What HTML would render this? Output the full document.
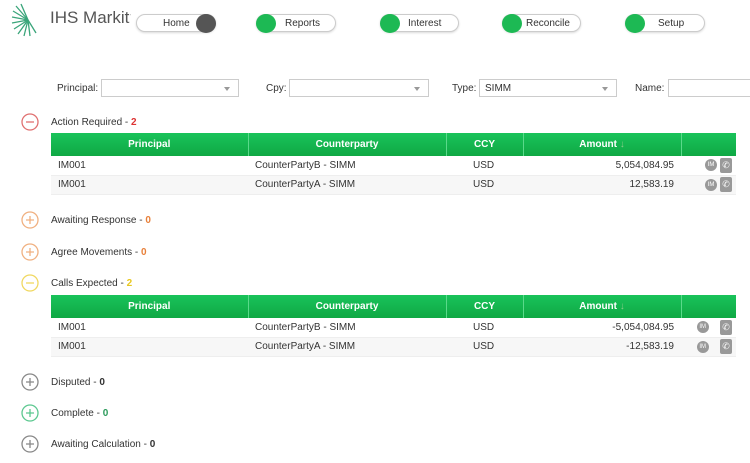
<!DOCTYPE html>
<html><head><style>
*{margin:0;padding:0;box-sizing:border-box}
body{width:750px;height:463px;background:#fff;font-family:"Liberation Sans",sans-serif;font-size:10px;color:#333;position:relative;overflow:hidden}
.a{position:absolute}
.pill{position:absolute;height:18px;border:1px solid #ccc;border-radius:9px;box-shadow:0 1px 2px rgba(0,0,0,.15);font-size:10px;line-height:17px;text-align:center;background:#fff}
.pill span{position:absolute;top:0;line-height:17px}
.dot{position:absolute;top:-1px;width:20px;height:19px;border-radius:50%;background:#1db954}
.lbl{position:absolute;font-size:10px;top:83px}
.sel{position:absolute;top:79px;height:18px;border:1px solid #ccc;background:#fff;font-size:10px;line-height:16px;padding-left:5px}
.sel i{position:absolute;right:8px;top:7px;border:3px solid transparent;border-top:4px solid #999}
.ic{position:absolute;left:21px}
.h{position:absolute;left:51px;font-size:10px}
table{position:absolute;left:51px;width:685px;border-collapse:collapse;font-size:10px}
th{background:linear-gradient(#19c35a,#0fa844);color:#fff;height:23px;font-weight:bold;border-right:1px solid #5ad98a}
td{height:19px;border-bottom:1px solid #eee;padding:0 7px}
tr.b td{background:#f7f7f7}
.im{display:inline-block;width:12px;height:12px;border-radius:50%;background:#999;color:#fff;font-size:6px;line-height:12px;text-align:center;vertical-align:middle;margin-right:3px}
.ph{display:inline-block;width:12px;height:15px;border-radius:2px;background:#999;vertical-align:middle;color:#fff;font-size:9px;line-height:15px;text-align:center}
</style></head><body>
<svg class="a" style="left:10px;top:3px" width="36" height="34" viewBox="0 0 36 34">
<g stroke="#3aa57a" stroke-width="1.3">
<line x1="18" y1="17" x2="3" y2="8"/><line x1="18" y1="17" x2="2" y2="14"/><line x1="18" y1="17" x2="2" y2="20"/><line x1="18" y1="17" x2="4" y2="26"/><line x1="18" y1="17" x2="8" y2="31"/><line x1="18" y1="17" x2="14" y2="33"/><line x1="18" y1="17" x2="6" y2="3"/><line x1="18" y1="17" x2="11" y2="1"/><line x1="18" y1="17" x2="20" y2="33"/><line x1="18" y1="17" x2="26" y2="30"/>
</g><circle cx="25" cy="10" r="8" fill="#fff"/></svg>
<div class="a" style="left:50px;top:8px;font-size:17px;color:#555">IHS Markit<sup style="font-size:6px">·</sup></div>
<div class="pill" style="left:136px;top:14px;width:80px"><span style="left:26px">Home</span><div class="dot" style="right:-1px;background:#555"></div></div>
<div class="pill" style="left:256px;top:14px;width:80px"><div class="dot" style="left:-1px"></div><span style="left:28px">Reports</span></div>
<div class="pill" style="left:380px;top:14px;width:79px"><div class="dot" style="left:-1px"></div><span style="left:27px">Interest</span></div>
<div class="pill" style="left:502px;top:14px;width:79px"><div class="dot" style="left:-1px"></div><span style="left:23px">Reconcile</span></div>
<div class="pill" style="left:625px;top:14px;width:80px"><div class="dot" style="left:-1px"></div><span style="left:32px">Setup</span></div>
<div class="lbl" style="left:57px">Principal:</div><div class="sel" style="left:101px;width:138px"><i></i></div>
<div class="lbl" style="left:266px">Cpy:</div><div class="sel" style="left:289px;width:140px"><i></i></div>
<div class="lbl" style="left:452px">Type:</div><div class="sel" style="left:479px;width:138px;line-height:18px">SIMM<i></i></div>
<div class="lbl" style="left:635px">Name:</div><div class="sel" style="left:668px;width:90px"></div>

<svg class="ic" style="top:113px" width="18" height="18"><circle cx="9" cy="9" r="8" fill="none" stroke="#e07070" stroke-width="1.3"/><line x1="5" y1="9" x2="13" y2="9" stroke="#e07070" stroke-width="1.3"/></svg>
<div class="h" style="top:117px">Action Required - <b style="color:#d33">2</b></div>
<table style="top:133px"><tr><th style="width:197px">Principal</th><th style="width:198px">Counterparty</th><th style="width:77px">CCY</th><th style="width:158px">Amount <span style="color:#8c8">↓</span></th><th style="border:none"></th></tr>
<tr><td>IM001</td><td>CounterPartyB - SIMM</td><td style="padding-left:27px">USD</td><td style="text-align:right">5,054,084.95</td><td style="text-align:right;padding:0 4px"><span class="im">IM</span><span class="ph">✆</span></td></tr>
<tr class="b"><td>IM001</td><td>CounterPartyA - SIMM</td><td style="padding-left:27px">USD</td><td style="text-align:right">12,583.19</td><td style="text-align:right;padding:0 4px"><span class="im">IM</span><span class="ph">✆</span></td></tr></table>

<svg class="ic" style="top:211px" width="18" height="18"><circle cx="9" cy="9" r="8" fill="none" stroke="#f0b080" stroke-width="1.3"/><path d="M5 9H13M9 5V13" stroke="#f0b080" stroke-width="1.3"/></svg>
<div class="h" style="top:215px">Awaiting Response - <b style="color:#e8803a">0</b></div>
<svg class="ic" style="top:243px" width="18" height="18"><circle cx="9" cy="9" r="8" fill="none" stroke="#f0b080" stroke-width="1.3"/><path d="M5 9H13M9 5V13" stroke="#f0b080" stroke-width="1.3"/></svg>
<div class="h" style="top:247px">Agree Movements - <b style="color:#e8803a">0</b></div>
<svg class="ic" style="top:274px" width="18" height="18"><circle cx="9" cy="9" r="8" fill="none" stroke="#f0d860" stroke-width="1.3"/><path d="M5 9H13" stroke="#f0d860" stroke-width="1.3"/></svg>
<div class="h" style="top:278px">Calls Expected - <b style="color:#e8c820">2</b></div>
<table style="top:295px"><tr><th style="width:197px">Principal</th><th style="width:198px">Counterparty</th><th style="width:77px">CCY</th><th style="width:158px">Amount <span style="color:#8c8">↓</span></th><th style="border:none"></th></tr>
<tr><td>IM001</td><td>CounterPartyB - SIMM</td><td style="padding-left:27px">USD</td><td style="text-align:right">-5,054,084.95</td><td style="text-align:right;padding:0 4px"><span class="im">IM</span>&nbsp;&nbsp;&nbsp;<span class="ph">✆</span></td></tr>
<tr class="b"><td>IM001</td><td>CounterPartyA - SIMM</td><td style="padding-left:27px">USD</td><td style="text-align:right">-12,583.19</td><td style="text-align:right;padding:0 4px"><span class="im">IM</span>&nbsp;&nbsp;&nbsp;<span class="ph">✆</span></td></tr></table>

<svg class="ic" style="top:373px" width="18" height="18"><circle cx="9" cy="9" r="8" fill="none" stroke="#888" stroke-width="1.3"/><path d="M5 9H13M9 5V13" stroke="#888" stroke-width="1.3"/></svg>
<div class="h" style="top:377px">Disputed - <b>0</b></div>
<svg class="ic" style="top:404px" width="18" height="18"><circle cx="9" cy="9" r="8" fill="none" stroke="#5cc890" stroke-width="1.3"/><path d="M5 9H13M9 5V13" stroke="#5cc890" stroke-width="1.3"/></svg>
<div class="h" style="top:408px">Complete - <b style="color:#2a9a5a">0</b></div>
<svg class="ic" style="top:435px" width="18" height="18"><circle cx="9" cy="9" r="8" fill="none" stroke="#888" stroke-width="1.3"/><path d="M5 9H13M9 5V13" stroke="#888" stroke-width="1.3"/></svg>
<div class="h" style="top:439px">Awaiting Calculation - <b>0</b></div>
</body></html>
